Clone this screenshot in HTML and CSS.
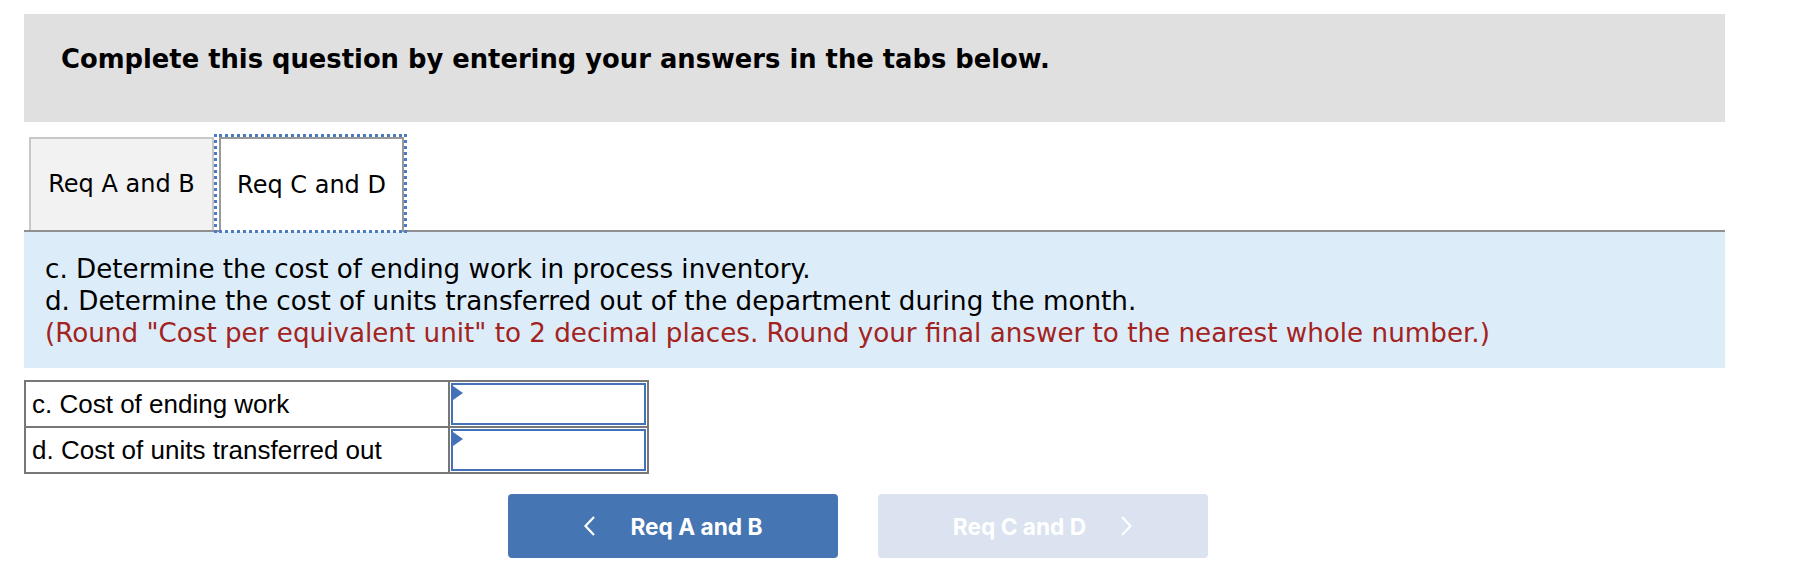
FILE: index.html
```html
<!DOCTYPE html>
<html>
<head>
<meta charset="utf-8">
<link rel="stylesheet" href="styles.css">
</head>
<body>
<div class="wrap">
  <div class="header">
    <h1 class="title">Complete this question by entering your answers in the tabs below.</h1>
  </div>
  <div class="tabs">
    <div class="tab">Req A and B</div>
    <div class="tab tab-active">Req C and D</div>
  </div>
  <div class="panel">
    <p class="line">c. Determine the cost of ending work in process inventory.</p>
    <p class="line">d. Determine the cost of units transferred out of the department during the month.</p>
    <p class="line note">(Round "Cost per equivalent unit" to 2 decimal places. Round your final answer to the nearest whole number.)</p>
  </div>
  <table class="answers">
    <tr>
      <td class="label">c. Cost of ending work</td>
      <td class="cell"><div class="input"><span class="flag"></span></div></td>
    </tr>
    <tr>
      <td class="label">d. Cost of units transferred out</td>
      <td class="cell"><div class="input"><span class="flag"></span></div></td>
    </tr>
  </table>
  <div class="nav">
    <button class="btn btn-prev">
      <svg class="chev" width="13" height="20" viewBox="0 0 13 20"><polyline points="11,1 2.5,10 11,19" fill="none" stroke="#fff" stroke-width="2.2"/></svg>
      <span>Req A and B</span>
    </button>
    <button class="btn btn-next">
      <span>Req C and D</span>
      <svg class="chev" width="13" height="20" viewBox="0 0 13 20"><polyline points="2,1 10.5,10 2,19" fill="none" stroke="#fff" stroke-width="2.2"/></svg>
    </button>
  </div>
</div>
</body>
</html>
```

FILE: styles.css
```css
html, body {
  margin: 0;
  padding: 0;
  background: #fff;
}

.wrap {
  margin: 14px 0 0 24px;
  width: 1701px;
  font-family: "DejaVu Sans", Verdana, sans-serif;
  color: #000;
}

.header {
  background: #e0e0e0;
  height: 108px;
  box-sizing: border-box;
  padding: 30px 20px 0 37px;
}

.title {
  margin: 0;
  font-size: 25.8px;
  line-height: 30px;
  font-weight: bold;
}

.tabs {
  margin-top: 15px;
  display: flex;
  align-items: flex-end;
  border-bottom: 2px solid #909090;
  height: 93px;
}

.tab {
  box-sizing: border-box;
  width: 185px;
  height: 93px;
  margin-left: 5px;
  border: 2px solid #c8c8c8;
  border-bottom: none;
  background: #f2f2f2;
  font-size: 24px;
  display: flex;
  align-items: center;
  justify-content: center;
  padding-bottom: 2px;
}

.tab-active {
  position: relative;
  width: 185px;
  height: 95px;
  margin-bottom: -2px;
  border-color: #999;
  background: #fff;
}

.tab-active::after {
  content: "";
  position: absolute;
  top: -5px;
  left: -7px;
  right: -5px;
  bottom: -1px;
  border: 3px dotted #4a7bc4;
}

.panel {
  background: #ddecf9;
  padding: 21px 20px 19px 21px;
}

.line {
  margin: 0;
  font-size: 26.2px;
  line-height: 32px;
}

.note {
  color: #a3231e;
}

.answers {
  margin-top: 12px;
  border-collapse: collapse;
  border: 2px solid #777;
  font-family: "Liberation Sans", Arial, sans-serif;
  font-size: 26px;
}

.answers td {
  border: 2px solid #777;
  padding: 0;
  height: 44px;
}

.label {
  width: 416px;
  padding: 0 0 0 6px !important;
}

.cell {
  width: 197px;
  vertical-align: top;
}

.input {
  position: relative;
  box-sizing: border-box;
  height: 42px;
  margin: 1px 1px 0 1px;
  border: 2px solid #4472b8;
  background: #fff;
}

.flag {
  position: absolute;
  left: 0;
  top: 1px;
  width: 0;
  height: 0;
  border-top: 7px solid transparent;
  border-bottom: 7px solid transparent;
  border-left: 10px solid #4472b8;
}

.nav {
  display: flex;
  gap: 40px;
  margin-top: 20px;
  padding-left: 484px;
}

.btn {
  width: 330px;
  height: 64px;
  border: none;
  border-radius: 4px;
  display: flex;
  align-items: center;
  justify-content: center;
  gap: 34px;
  font-family: Inter, Roboto, sans-serif;
  font-weight: 700;
  font-size: 22.7px;
  color: #fff;
  padding: 0;
}

.btn-prev {
  background: #4675b3;
}

.btn-next {
  background: #dae3ef;
}

.chev {
  display: block;
}
```
